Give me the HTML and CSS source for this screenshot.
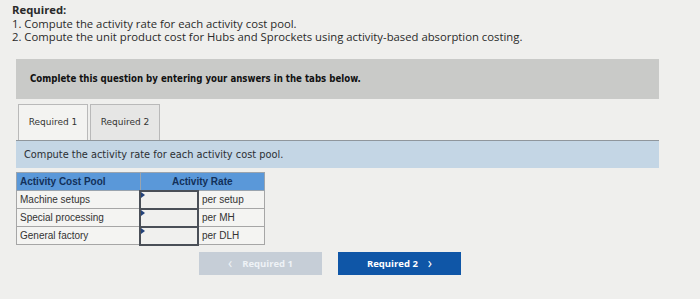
FILE: index.html
```html
<!DOCTYPE html>
<html>
<head>
<meta charset="utf-8">
<link rel="stylesheet" href="styles.css">
</head>
<body>
<div class="req">
  <div class="req-title">Required:</div>
  <div>1. Compute the activity rate for each activity cost pool.</div>
  <div>2. Compute the unit product cost for Hubs and Sprockets using activity-based absorption costing.</div>
</div>
<div class="panel">
  <div class="notice">Complete this question by entering your answers in the tabs below.</div>
  <div class="tabs">
    <div class="tab active">Required 1</div>
    <div class="tab">Required 2</div>
  </div>
  <div class="strip">Compute the activity rate for each activity cost pool.</div>
  <table class="grid">
    <thead>
      <tr><th class="c1">Activity Cost Pool</th><th class="hr" colspan="2">Activity Rate</th></tr>
    </thead>
    <tbody>
      <tr><td class="c1">Machine setups</td><td class="inp"><span class="mark"></span></td><td class="unit">per setup</td></tr>
      <tr><td class="c1">Special processing</td><td class="inp"><span class="mark"></span></td><td class="unit">per MH</td></tr>
      <tr><td class="c1">General factory</td><td class="inp"><span class="mark"></span></td><td class="unit">per DLH</td></tr>
    </tbody>
  </table>
  <div class="nav">
    <div class="btn prev"><span class="chev">&lsaquo;</span>Required 1</div>
    <div class="btn next">Required 2<span class="chev r">&rsaquo;</span></div>
  </div>
</div>
</body>
</html>
```
FILE: styles.css
```css
html, body { margin: 0; padding: 0; }
body {
  width: 700px;
  height: 299px;
  overflow: hidden;
  background: #efefed;
  font-family: "Open Sans", "Liberation Sans", sans-serif;
  color: #2a2a2a;
}
.req {
  padding: 3px 0 0 12px;
  font-size: 11.3px;
  line-height: 13.5px;
}
.req-title { font-weight: 700; }
.panel {
  margin-left: 16px;
  width: 643px;
}
.notice {
  margin-top: 15px;
  height: 40px;
  background: #c9cac8;
  font-family: "DejaVu Sans Condensed", "DejaVu Sans", sans-serif;
  font-weight: 700;
  font-size: 9.6px;
  color: #111;
  display: flex;
  align-items: center;
  padding-left: 14px;
  box-sizing: border-box;
}
.tabs {
  margin-top: 5px;
  margin-left: 2px;
  display: flex;
  gap: 2px;
  height: 36px;
}
.tab {
  width: 70px;
  box-sizing: border-box;
  border: 1px solid #b9b9b9;
  border-bottom: none;
  background: #e6e6e5;
  font-family: "DejaVu Sans", sans-serif;
  font-size: 9px;
  color: #333;
  display: flex;
  align-items: center;
  justify-content: center;
}
.tab.active { background: #f3f3f1; }
.strip {
  height: 28px;
  box-sizing: border-box;
  background: #c4d6e5;
  border-top: 1px solid #8f969c;
  font-family: "DejaVu Sans", sans-serif;
  font-size: 9.8px;
  color: #2b2f33;
  display: flex;
  align-items: center;
  padding-left: 8px;
}
.grid {
  margin-top: 4px;
  border-collapse: collapse;
  font-family: "Liberation Sans", Arial, sans-serif;
  font-size: 10px;
  color: #333;
}
.grid th {
  background: #5a98d9;
  color: #12305a;
  font-weight: 700;
  height: 17px;
  line-height: 17px;
  padding: 0 3px;
  text-align: left;
  border: 1px solid #9aa4ae;
}
.grid th.hr { text-align: center; border-left: 1px solid #c8d8ea; }
.grid td {
  height: 17px;
  line-height: 17px;
  padding: 0 3px;
  border: 1px solid #a6a6a6;
  background: #f4f4f2;
}
.grid td.c1 { width: 116px; }
.grid th.c1 { width: 116px; }
.grid td.inp {
  width: 56px;
  height: 16px;
  border: 2px solid #4a4f57;
  position: relative;
  padding: 0;
  background: #f0f0ee;
}
.grid td.unit { width: 59px; }
.mark {
  position: absolute;
  left: 0;
  top: 0;
  width: 0;
  height: 0;
  border-top: 3px solid transparent;
  border-bottom: 3px solid transparent;
  border-left: 4px solid #23427a;
}
.nav {
  margin-top: 6px;
  display: flex;
  gap: 16px;
  padding-left: 183px;
}
.btn {
  width: 123px;
  height: 23px;
  font-family: "Open Sans", "Liberation Sans", sans-serif;
  font-weight: 700;
  font-size: 9.5px;
  color: #fff;
  display: flex;
  align-items: center;
  justify-content: center;
}
.btn.prev { background: #c6ced7; color: #eef2f6; }
.btn.next { background: #0f56a7; }
.chev { font-size: 14px; font-weight: 400; margin-right: 10px; line-height: 1; }
.chev.r { margin-right: 0; margin-left: 10px; }
```
